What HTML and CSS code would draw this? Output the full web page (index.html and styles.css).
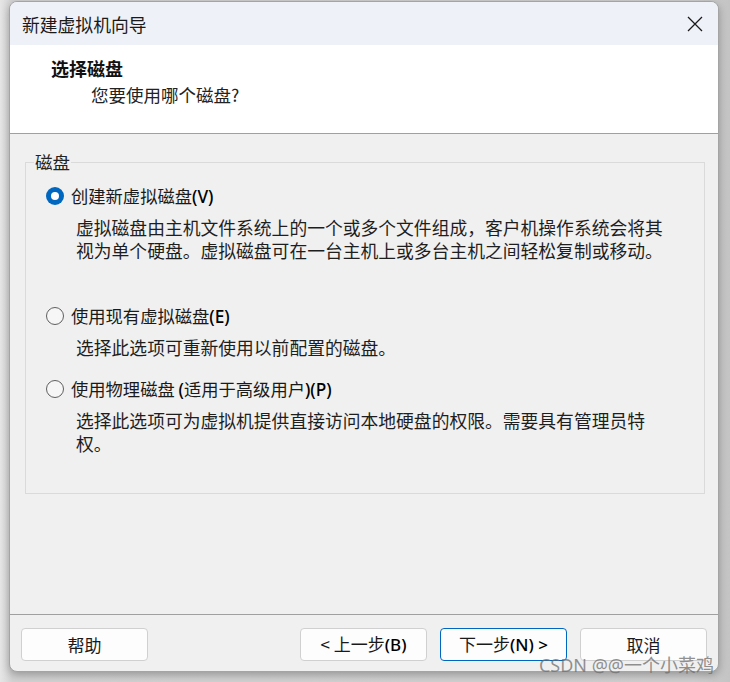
FILE: index.html
```html
<!DOCTYPE html>
<html lang="zh-CN">
<head>
<meta charset="utf-8">
<title>新建虚拟机向导</title>
<link rel="stylesheet" href="styles.css">
</head>
<body>
<div class="window">
  <div class="titlebar">
    <span class="title">新建虚拟机向导</span>
    <svg class="close" width="16" height="16" viewBox="0 0 16 16" aria-hidden="true">
      <path d="M1 1 L15 15 M15 1 L1 15" stroke="#1a1a1a" stroke-width="1.3" fill="none"/>
    </svg>
  </div>
  <div class="header">
    <div class="heading">选择磁盘</div>
    <div class="subheading">您要使用哪个磁盘?</div>
  </div>
  <div class="content">
    <fieldset class="group">
      <legend class="legend">磁盘</legend>
      <div class="option option-first">
        <div class="radio-row"><span class="radio radio-on"></span><span class="label">创建新虚拟磁盘<span class="latin">(V)</span></span></div>
        <div class="desc">虚拟磁盘由主机文件系统上的一个或多个文件组成，客户机操作系统会将其<br>视为单个硬盘。虚拟磁盘可在一台主机上或多台主机之间轻松复制或移动。</div>
      </div>
      <div class="option option-second">
        <div class="radio-row"><span class="radio"></span><span class="label">使用现有虚拟磁盘<span class="latin">(E)</span></span></div>
        <div class="desc">选择此选项可重新使用以前配置的磁盘。</div>
      </div>
      <div class="option">
        <div class="radio-row"><span class="radio"></span><span class="label">使用物理磁盘 <span class="latin">(</span>适用于高级用户<span class="latin">)(P)</span></span></div>
        <div class="desc">选择此选项可为虚拟机提供直接访问本地硬盘的权限。需要具有管理员特<br>权。</div>
      </div>
    </fieldset>
  </div>
  <div class="footer">
    <button class="btn">帮助</button>
    <div class="nav">
      <button class="btn">&lt; 上一步<span class="latin">(B)</span></button>
      <button class="btn btn-default">下一步<span class="latin">(N) &gt;</span></button>
      <button class="btn">取消</button>
    </div>
  </div>
</div>
<div class="watermark">CSDN @@一个小菜鸡</div>
</body>
</html>
```
FILE: styles.css
```css
html, body {
  margin: 0;
  padding: 0;
}
body {
  width: 730px;
  height: 682px;
  overflow: hidden;
  background: linear-gradient(90deg, #e6e6e6 0, #d2d2d2 12px, #cfcfcf 95%, #c4c4c4 100%);
  font-family: "Noto Sans CJK SC", "Noto Sans", sans-serif;
  color: #1a1a1a;
  position: relative;
}
.window {
  box-sizing: border-box;
  margin: 1px 0 0 9px;
  width: 710px;
  height: 671px;
  border: 1px solid #a4a4a4;
  border-radius: 8px;
  overflow: hidden;
  display: flex;
  flex-direction: column;
  background: #f0f0f0;
  box-shadow: 0 3px 8px rgba(0, 0, 0, 0.28);
}
.titlebar {
  height: 43px;
  flex: none;
  background: #eef1f8;
  display: flex;
  align-items: center;
  justify-content: space-between;
  padding: 0 15px 0 12px;
}
.title {
  font-size: 17.8px;
  line-height: 24px;
  color: #1a1a1a;
}
.close {
  display: block;
}
.header {
  height: 89px;
  flex: none;
  background: #ffffff;
  border-bottom: 1px solid #a0a0a0;
  padding: 11px 0 0 41px;
  box-sizing: border-box;
}
.heading {
  font-size: 18px;
  line-height: 24px;
  font-weight: 700;
  color: #111;
}
.subheading {
  margin: 3px 0 0 40px;
  font-size: 17.5px;
  line-height: 24px;
  color: #222;
}
.content {
  flex: 1;
  padding: 16px 13px 0 15px;
}
.group {
  margin: 0;
  height: 344px;
  box-sizing: border-box;
  border: 1px solid #dadada;
  padding: 10px 0 0 0;
  min-width: 0;
}
.legend {
  padding: 0 1px;
  margin-left: 8px;
  font-size: 17.5px;
  line-height: 24px;
  color: #222;
}
.option-first {
  margin-bottom: 42px;
}
.option-second {
  margin-bottom: 18px;
}
.radio-row {
  display: flex;
  align-items: center;
  height: 24px;
  padding-left: 20px;
}
.radio {
  box-sizing: border-box;
  width: 18px;
  height: 18px;
  border-radius: 50%;
  border: 1px solid #5f5f5f;
  background: #f6f6f6;
  flex: none;
  margin-right: 7px;
  display: flex;
  align-items: center;
  justify-content: center;
}
.radio-on {
  border: none;
  background: #0067c0;
}
.radio-on::after {
  content: "";
  width: 8px;
  height: 8px;
  border-radius: 50%;
  background: #ffffff;
}
.label {
  font-size: 17.3px;
  line-height: 24px;
  color: #1a1a1a;
  white-space: nowrap;
}
.latin {
  font-family: "Noto Sans", "Noto Sans CJK SC", sans-serif;
  font-weight: 500;
  color: #000;
}
.desc {
  margin: 8px 0 0 50px;
  font-size: 17.8px;
  line-height: 23px;
  color: #1e1e1e;
  white-space: nowrap;
}
.footer {
  height: 57px;
  flex: none;
  border-top: 1px solid #a0a0a0;
  display: flex;
  justify-content: space-between;
  padding: 13px 11px 0 11px;
  box-sizing: border-box;
}
.nav {
  display: flex;
  gap: 13px;
}
.btn {
  box-sizing: border-box;
  width: 127px;
  height: 33px;
  background: #fdfdfd;
  border: 1px solid #d0d0d0;
  border-radius: 4px;
  font-family: "Noto Sans CJK SC", "Noto Sans", sans-serif;
  font-size: 17px;
  line-height: 24px;
  color: #1a1a1a;
  padding: 0;
  margin: 0;
}
.btn-default {
  border-color: #0067c0;
}
.watermark {
  position: absolute;
  right: 16px;
  top: 655px;
  font-family: "Noto Sans", "Noto Sans CJK SC", sans-serif;
  font-size: 18px;
  line-height: 20px;
  color: rgba(110, 110, 110, 0.75);
  white-space: nowrap;
}
```
